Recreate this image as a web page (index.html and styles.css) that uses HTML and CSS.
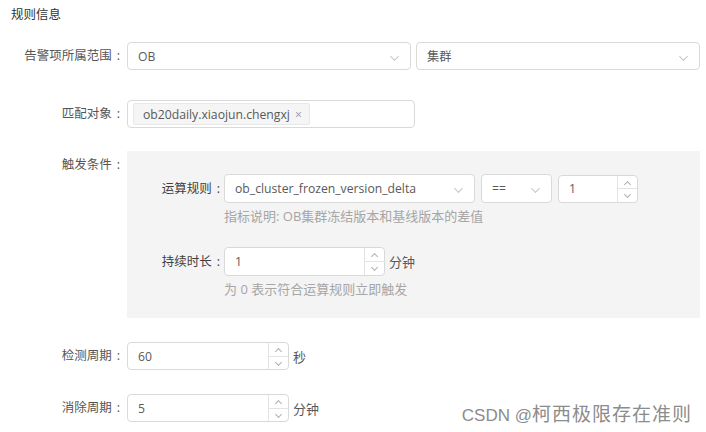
FILE: index.html
```html
<!DOCTYPE html>
<html lang="zh-CN">
<head>
<meta charset="utf-8">
<link rel="stylesheet" href="styles.css">
</head>
<body>
<div class="page">
  <div class="title">规则信息</div>
  <div class="form">
    <div class="row r1">
      <div class="label">告警项所属范围<span class="colon">:</span></div>
      <div class="ctrls">
        <div class="select w-half"><span class="val">OB</span><span class="arrow"></span></div>
        <div class="select w-half"><span class="val">集群</span><span class="arrow"></span></div>
      </div>
    </div>
    <div class="row r2">
      <div class="label">匹配对象<span class="colon">:</span></div>
      <div class="multi">
        <span class="tag">ob20daily.xiaojun.chengxj<span class="tag-x">×</span></span>
      </div>
    </div>
    <div class="row r3">
      <div class="label">触发条件<span class="colon">:</span></div>
      <div class="panel">
        <div class="sub-row">
          <div class="sub-label">运算规则<span class="colon">:</span></div>
          <div class="sub-body">
            <div class="ctrls">
              <div class="select w-metric"><span class="val">ob_cluster_frozen_version_delta</span><span class="arrow"></span></div>
              <div class="select w-op"><span class="val">==</span><span class="arrow"></span></div>
              <div class="num w-thr"><span class="val">1</span><span class="step"><span class="up"></span><span class="down"></span></span></div>
            </div>
            <div class="help">指标说明: OB集群冻结版本和基线版本的差值</div>
          </div>
        </div>
        <div class="sub-row sr2">
          <div class="sub-label">持续时长<span class="colon">:</span></div>
          <div class="sub-body">
            <div class="ctrls c-dur">
              <div class="num w-dur"><span class="val">1</span><span class="step"><span class="up"></span><span class="down"></span></span></div>
              <span class="unit">分钟</span>
            </div>
            <div class="help">为 0 表示符合运算规则立即触发</div>
          </div>
        </div>
      </div>
    </div>
    <div class="row r4">
      <div class="label">检测周期<span class="colon">:</span></div>
      <div class="ctrls">
        <div class="num w-period"><span class="val">60</span><span class="step"><span class="up"></span><span class="down"></span></span></div>
        <span class="unit u-bottom">秒</span>
      </div>
    </div>
    <div class="row r5">
      <div class="label">消除周期<span class="colon">:</span></div>
      <div class="ctrls">
        <div class="num w-period"><span class="val">5</span><span class="step"><span class="up"></span><span class="down"></span></span></div>
        <span class="unit u-bottom">分钟</span>
      </div>
    </div>
  </div>
  <div class="watermark">CSDN @<span class="wm-cjk">柯西极限存在准则</span></div>
</div>
</body>
</html>
```
FILE: styles.css
```css
* { box-sizing: border-box; }
html, body { margin: 0; padding: 0; background: #fff; }
body {
  font-family: "Open Sans", "Noto Sans CJK SC", sans-serif;
  font-size: 12px;
  color: #595959;
  width: 706px;
  height: 432px;
  overflow: hidden;
}
.page { position: relative; width: 706px; height: 432px; }
.title {
  padding-left: 11px;
  padding-top: 6px;
  line-height: 18px;
  font-size: 12.5px;
  color: #333;
}
.form { margin-top: 18px; padding-right: 6px; }
.row { display: flex; align-items: flex-start; }
.label {
  width: 127px;
  flex: 0 0 127px;
  padding-right: 7px;
  text-align: right;
  line-height: 28px;
  font-size: 12.5px;
  color: #555;
}
.colon { margin-left: 5px; }
.r2 { margin-top: 30px; }
.r3 { margin-top: 23px; }
.r4 { margin-top: 24px; }
.r5 { margin-top: 24px; }
.ctrls { display: flex; align-items: center; }
.r1 .ctrls { flex: 1; gap: 5px; }
.select, .num, .multi {
  position: relative;
  height: 28px;
  border: 1px solid #d9d9d9;
  border-radius: 4px;
  background: #fff;
  display: flex;
  align-items: center;
}
.val { padding-left: 10px; font-size: 12.2px; color: #595959; white-space: nowrap; }
.w-half { flex: 1; }
.arrow {
  position: absolute;
  right: 12px;
  top: 10px;
  width: 7px;
  height: 7px;
  border-right: 1px solid #c4c4c4;
  border-bottom: 1px solid #c4c4c4;
  transform: rotate(45deg) scale(0.9, 0.9);
}
.multi { width: 288px; padding-left: 5px; }
.tag {
  display: inline-flex;
  align-items: center;
  height: 22px;
  padding: 0 7px 0 9px;
  background: #f5f5f5;
  border: 1px solid #e8e8e8;
  border-radius: 2px;
  font-size: 12.2px;
  color: #595959;
}
.tag-x { margin-left: 5px; color: #999; font-size: 12px; }
.panel {
  flex: 1;
  background: #f4f4f4;
  height: 167px;
  padding-top: 23px;
}
.sub-row { display: flex; align-items: flex-start; }
.sr2 { margin-top: 22px; }
.sub-label {
  width: 97px;
  flex: 0 0 97px;
  padding-right: 4px;
  text-align: right;
  line-height: 29px;
  font-size: 12.5px;
  color: #404040;
}
.sub-body { display: flex; flex-direction: column; }
.sub-body .ctrls { gap: 6px; }
.sub-body .c-dur { gap: 4px; }
.w-metric { width: 251px; height: 29px; }
.w-op { width: 71px; height: 29px; }
.w-thr { width: 80px; height: 28px; }
.w-dur { width: 161px; height: 29px; }
.w-period { width: 162px; }
.num .step {
  position: absolute;
  right: 0;
  top: 0;
  bottom: 0;
  width: 20px;
  border-left: 1px solid #e3e3e3;
  display: flex;
  flex-direction: column;
}
.step .up, .step .down { flex: 1; position: relative; }
.step .up { border-bottom: 1px solid #e3e3e3; }
.step .up::after, .step .down::after {
  content: "";
  position: absolute;
  left: 7px;
  width: 4px;
  height: 4px;
  border-left: 1px solid #b0b0b0;
  border-top: 1px solid #b0b0b0;
}
.step .up::after { top: 6px; transform: rotate(45deg); }
.step .down::after { top: 3px; transform: rotate(225deg); }
.help {
  margin-top: 4px;
  line-height: 18px;
  color: #a6a6a6;
  font-size: 13px;
}
.unit { font-size: 13px; color: #595959; }
.u-bottom { margin-left: 4px; }
.watermark {
  position: absolute;
  right: 14px;
  top: 399px;
  font-family: "Liberation Sans", "Noto Sans CJK SC", sans-serif;
  font-size: 17px;
  color: #8c8c8c;
  text-shadow: 0 0 1px #fff, 1px 1px 0 #fff;
  white-space: nowrap;
}
.wm-cjk { font-size: 19px; letter-spacing: 1px; }
```
